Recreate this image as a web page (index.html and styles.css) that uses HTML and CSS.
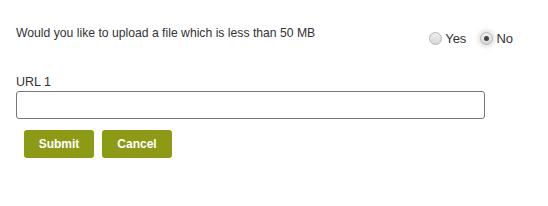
FILE: index.html
```html
<!DOCTYPE html>
<html lang="en">
  <head>
    <meta charset="UTF-8" />
    <meta name="viewport" content="width=device-width, initial-scale=1.0" />
    <title>Upload</title>
    <link rel="stylesheet" href="styles.css">
  </head>
  <body>
    <div class="container">
      <div class="question-row">
        <div class="question">Would you like to upload a file which is less than 50 MB</div>
        <div class="options">
          <label class="option">
            <input type="radio" name="small" value="yes" />
            <span>Yes</span>
          </label>
          <label class="option">
            <input type="radio" name="small" value="no" class="focused" checked />
            <span>No</span>
          </label>
        </div>
      </div>

      <div class="field">
        <label for="url1">URL 1</label>
        <input type="text" id="url1" />
      </div>

      <!-- Buttons -->
      <div class="buttons">
        <button class="btn">Submit</button>
        <button class="btn">Cancel</button>
      </div>
    </div>
  </body>
</html>
```

FILE: styles.css
```css
body {
  font-family: "Liberation Sans", Arial, sans-serif;
  margin: 0;
  background-color: #fff;
  color: #333;
}
.container {
  width: 470px;
  padding: 25px 16px 0 16px;
}
.question-row {
  display: flex;
  justify-content: space-between;
  align-items: flex-start;
}
.question {
  font-size: 12.2px;
  line-height: 16px;
}
.options {
  display: flex;
  gap: 14px;
  margin-top: 6px;
  margin-right: -27px;
}
.option {
  display: flex;
  align-items: center;
  gap: 3px;
  font-size: 13px;
  color: #333;
}
.option input {
  appearance: none;
  width: 13px;
  height: 13px;
  margin: 0;
  border: 1px solid #b4b4b4;
  border-radius: 50%;
  background: linear-gradient(#f0f0f0, #d8d8d8);
  position: relative;
}
.option input:checked::after {
  content: "";
  position: absolute;
  top: 3px;
  left: 3px;
  width: 5px;
  height: 5px;
  border-radius: 50%;
  background-color: #444;
}
.option input.focused {
  box-shadow: 0 0 4px 2px rgba(0, 0, 0, 0.12);
}
.field {
  margin-top: 28px;
}
.field label {
  display: block;
  font-size: 12.5px;
  line-height: 16px;
  margin-bottom: 1px;
}
.field input {
  box-sizing: border-box;
  width: 469px;
  height: 28px;
  margin: 0;
  border: 1px solid #777;
  border-radius: 3px;
  padding: 4px 6px;
  font-size: 13px;
}
.buttons {
  display: flex;
  gap: 8px;
  margin-top: 11px;
  padding-left: 8px;
}
.btn {
  width: 70px;
  height: 28px;
  border: none;
  border-radius: 3px;
  background-color: #8d9a15;
  color: #fff;
  font-family: "Liberation Sans", Arial, sans-serif;
  font-weight: bold;
  font-size: 12px;
  cursor: pointer;
}
```
